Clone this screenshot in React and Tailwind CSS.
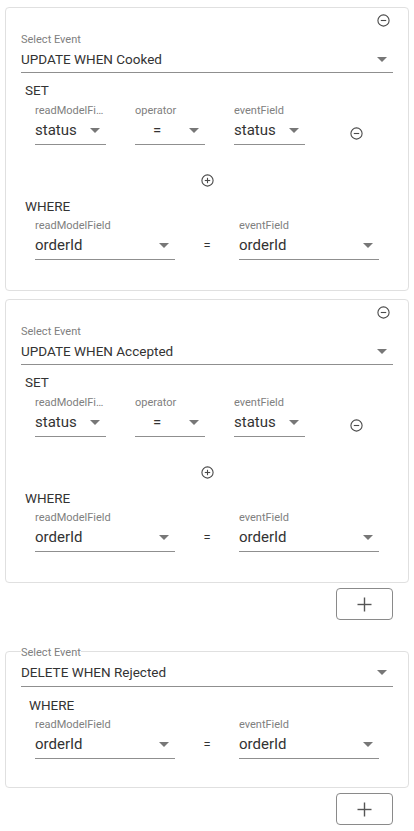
import React from "react";

const Arrow = () => (
  <svg width="10" height="5" viewBox="0 0 10 5" className="shrink-0">
    <path d="M0 0 L5 5 L10 0 Z" fill="#777" />
  </svg>
);

const MinusCircle = () => (
  <svg width="13" height="13" viewBox="0 0 13 13">
    <circle cx="6.5" cy="6.5" r="5.6" fill="none" stroke="#4a4a4a" strokeWidth="1.1" />
    <line x1="3.8" y1="6.5" x2="9.2" y2="6.5" stroke="#4a4a4a" strokeWidth="1.1" />
  </svg>
);

const PlusCircle = () => (
  <svg width="13" height="13" viewBox="0 0 13 13">
    <circle cx="6.5" cy="6.5" r="5.6" fill="none" stroke="#4a4a4a" strokeWidth="1.1" />
    <line x1="3.8" y1="6.5" x2="9.2" y2="6.5" stroke="#4a4a4a" strokeWidth="1.1" />
    <line x1="6.5" y1="3.8" x2="6.5" y2="9.2" stroke="#4a4a4a" strokeWidth="1.1" />
  </svg>
);

function Field({ label, value, w, center }) {
  return (
    <div className={w}>
      <div className="h-[12px] text-[11px] leading-[12px] text-[#808080] truncate">{label}</div>
      <div className="h-[28px] flex items-center justify-between border-b border-[#8f8f8f] pr-[6px]">
        <span className={"text-[15px] text-[#333] " + (center ? "pl-[18px]" : "")}>{value}</span>
        <Arrow />
      </div>
    </div>
  );
}

function EventSelect({ value, overlap }) {
  return (
    <div className={overlap ? "-mt-[5px]" : "pt-[2px]"}>
      <div className="h-[12px] text-[11px] leading-[12px] text-[#808080] bg-white w-fit">Select Event</div>
      <div className={(overlap ? "h-[28px]" : "h-[27px]") + " flex items-center justify-between border-b border-[#8f8f8f] pr-[6px]"}>
        <span className="text-[13.5px] text-[#333]">{value}</span>
        <Arrow />
      </div>
    </div>
  );
}

function Where({ pl }) {
  return (
    <>
      <div className={"h-[20px] flex items-center text-[13.5px] text-[#333] " + pl}>WHERE</div>
      <div className="mt-[4px] pl-[14px] flex items-end">
        <Field label="readModelField" value="orderId" w="w-[140px]" />
        <div className="w-[64px] h-[28px] flex items-center justify-center text-[13px] text-[#333]">=</div>
        <Field label="eventField" value="orderId" w="w-[140px]" />
      </div>
    </>
  );
}

function UpdateCard({ event }) {
  return (
    <div className="border border-[#e0e0e0] rounded-[4px] px-[15px] pb-[30px]">
      <div className="h-[24px] flex items-center justify-end pr-[3px]">
        <MinusCircle />
      </div>
      <EventSelect value={event} />
      <div className="mt-[7px] h-[20px] flex items-center pl-[4px] text-[13.5px] text-[#333]">SET</div>
      <div className="mt-[5px] pl-[14px] flex items-end gap-[29px]">
        <Field label="readModelField" value="status" w="w-[71px]" />
        <Field label="operator" value="=" w="w-[70px]" center />
        <Field label="eventField" value="status" w="w-[71px]" />
        <div className="h-[24px] flex items-center ml-[16px]">
          <MinusCircle />
        </div>
      </div>
      <div className="h-[51px] pt-[29px] flex justify-center">
        <PlusCircle />
      </div>
      <Where pl="pl-[4px]" />
    </div>
  );
}

function AddButton() {
  return (
    <div className="flex justify-end pr-[16px] mt-[5px]">
      <div className="w-[57px] h-[32px] border border-[#8a8a8a] rounded-[4px] flex items-center justify-center">
        <svg width="15" height="15" viewBox="0 0 15 15">
          <line x1="0.5" y1="7.5" x2="14.5" y2="7.5" stroke="#555" strokeWidth="1.4" />
          <line x1="7.5" y1="0.5" x2="7.5" y2="14.5" stroke="#555" strokeWidth="1.4" />
        </svg>
      </div>
    </div>
  );
}

export default function App() {
  return (
    <div className="w-[414px] h-[831px] bg-white overflow-hidden px-[5px] pt-[7px]" style={{ fontFamily: "Roboto, 'Liberation Sans', sans-serif" }}>
      <UpdateCard event="UPDATE WHEN Cooked" />
      <div className="mt-[8px]">
        <UpdateCard event="UPDATE WHEN Accepted" />
      </div>
      <AddButton />
      <div className="mt-[31px] border border-[#e0e0e0] rounded-[4px] px-[15px] pb-[28px]">
        <EventSelect value="DELETE WHEN Rejected" overlap />
        <div className="mt-[8px]">
          <Where pl="pl-[8px]" />
        </div>
      </div>
      <AddButton />
    </div>
  );
}
